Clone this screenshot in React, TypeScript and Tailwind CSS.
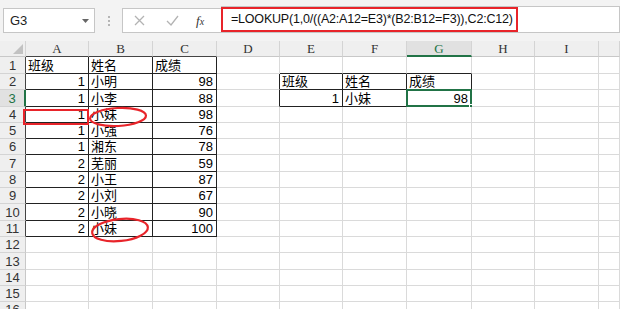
import React from 'react';

const COLS = [26, 63, 64, 64, 63, 63, 64, 65, 63, 64, 21];
const LETTERS = ['', 'A', 'B', 'C', 'D', 'E', 'F', 'G', 'H', 'I', ''];

type Cell = { v: string; num?: boolean };

// sheet data keyed by "row,col"
const data: Record<string, Cell> = {};
const put = (r: number, c: number, v: string, num = false) => (data[`${r},${c}`] = { v, num });

const klass = ['1', '1', '1', '1', '1', '2', '2', '2', '2', '2'];
const names = ['小明', '小李', '小妹', '小强', '湘东', '芜丽', '小王', '小刘', '小晓', '小妹'];
const scores = ['98', '88', '98', '76', '78', '59', '87', '67', '90', '100'];
put(1, 1, '班级');
put(1, 2, '姓名');
put(1, 3, '成绩');
klass.forEach((k, i) => {
  put(i + 2, 1, k, true);
  put(i + 2, 2, names[i]);
  put(i + 2, 3, scores[i], true);
});
put(2, 5, '班级');
put(2, 6, '姓名');
put(2, 7, '成绩');
put(3, 5, '1', true);
put(3, 6, '小妹');
put(3, 7, '98', true);

const inBox = (r: number, c: number) =>
  (r >= 1 && r <= 11 && c >= 1 && c <= 3) || (r >= 2 && r <= 3 && c >= 5 && c <= 7);

const ROWS = 16;

export default function App() {
  const cells: React.ReactNode[] = [];

  for (let r = 0; r <= ROWS; r++) {
    for (let c = 0; c < COLS.length; c++) {
      const key = `${r}-${c}`;
      const rightDark = inBox(r, c) || inBox(r, c + 1);
      const bottomDark = inBox(r, c) || inBox(r + 1, c);

      if (r === 0) {
        // column header strip
        if (c === 0) {
          cells.push(
            <div key={key} className="relative bg-[#efefef] border-r border-b border-r-[#d4d4d4] border-b-[#c8c8c8]">
              <svg className="absolute right-[2px] bottom-[2px]" width="10" height="10" viewBox="0 0 10 10">
                <polygon points="10,0 10,10 0,10" fill="#c2c2c2" />
              </svg>
            </div>
          );
          continue;
        }
        const active = c === 7;
        cells.push(
          <div
            key={key}
            className={
              'flex items-center justify-center border-r border-r-[#d4d4d4] text-[13px] leading-none font-["Liberation_Serif",serif] ' +
              (active
                ? 'bg-[#e1e1e1] text-[#217346] border-b-2 border-b-[#217346]'
                : 'bg-[#efefef] text-[#333] border-b ' + (bottomDark ? 'border-b-[#444]' : 'border-b-[#c8c8c8]'))
            }
          >
            {LETTERS[c]}
          </div>
        );
        continue;
      }

      if (c === 0) {
        // row header
        const active = r === 3;
        cells.push(
          <div
            key={key}
            className={
              'flex items-end justify-center pb-[1px] border-b border-b-[#d4d4d4] text-[13px] leading-none font-["Liberation_Sans",sans-serif] ' +
              (active
                ? 'bg-[#e1e1e1] text-[#217346] border-r-2 border-r-[#217346]'
                : 'bg-[#efefef] text-[#333] border-r ' + (rightDark ? 'border-r-[#444]' : 'border-r-[#c8c8c8]'))
            }
          >
            {r}
          </div>
        );
        continue;
      }

      const cell = data[`${r},${c}`];
      const selected = r === 3 && c === 7;
      cells.push(
        <div
          key={key}
          className={
            'relative flex items-end bg-white border-r border-b overflow-visible text-[13px] leading-none text-black font-["Liberation_Sans","Noto_Sans_CJK_SC",sans-serif] ' +
            (rightDark ? 'border-r-[#222] ' : 'border-r-[#dadada] ') +
            (bottomDark ? 'border-b-[#222] ' : 'border-b-[#dadada] ') +
            (cell?.num ? 'justify-end pr-[3px] pb-[1px]' : 'justify-start pl-[2px] pb-[1px]')
          }
        >
          {cell?.v}
          {selected && (
            <>
              <span className="absolute -left-[1px] -top-[1px] -right-[1px] -bottom-[1px] border-2 border-[#217346]" />
              <span className="absolute -right-[4px] -bottom-[4px] w-[6px] h-[6px] bg-[#217346] border border-white" />
            </>
          )}
        </div>
      );
    }
  }

  return (
    <div className="w-[620px] h-[309px] overflow-hidden bg-[#f3f3f3] flex flex-col">
      {/* formula bar */}
      <div className="h-[41px] shrink-0 flex items-start pt-[8px] pl-[3px]">
        <div className="w-[92px] h-[25px] bg-white border border-[#c6c6c6] flex items-center justify-between pl-[6px] pr-[5px] text-[13px] text-[#222] font-['Liberation_Sans',sans-serif]">
          <span>G3</span>
          <svg width="7" height="4" viewBox="0 0 7 4">
            <polygon points="0,0 7,0 3.5,4" fill="#666" />
          </svg>
        </div>
        <div className="w-[27px] h-[25px] flex items-center justify-center">
          <div className="flex flex-col gap-[2px]">
            <span className="w-[2px] h-[2px] bg-[#b5b5b5]" />
            <span className="w-[2px] h-[2px] bg-[#b5b5b5]" />
            <span className="w-[2px] h-[2px] bg-[#b5b5b5]" />
          </div>
        </div>
        <div className="w-[99px] h-[25px] bg-white border border-[#c6c6c6] border-r-0 flex items-center">
          <svg className="ml-[11px]" width="11" height="11" viewBox="0 0 11 11">
            <path d="M1 1 L10 10 M10 1 L1 10" stroke="#b3b3b3" strokeWidth="1.3" />
          </svg>
          <svg className="ml-[21px]" width="13" height="11" viewBox="0 0 13 11">
            <path d="M1 6 L5 10 L12 1" stroke="#b3b3b3" strokeWidth="1.3" fill="none" />
          </svg>
          <span className="ml-[17px] text-[13px] italic text-[#333] font-['Liberation_Serif',serif]">
            f<span className="text-[10px]">x</span>
          </span>
        </div>
        <div className="flex-1 h-[27px] -mt-[2px] bg-white border border-[#c6c6c6] border-l-0 flex items-stretch">
          <div className="w-[297px] shrink-0 border-2 border-[#e8242a] flex items-center pl-[8px] whitespace-nowrap overflow-hidden text-[12.5px] text-[#111] font-['Liberation_Sans',sans-serif] tracking-[-0.2px]">
            =LOOKUP(1,0/((A2:A12=E3)*(B2:B12=F3)),C2:C12)
          </div>
        </div>
      </div>

      {/* sheet */}
      <div className="relative">
        <div className="grid grid-cols-[26px_63px_64px_64px_63px_63px_64px_65px_63px_64px_21px] grid-rows-[16px_17px_repeat(15,16.3px)]">
          {cells}
        </div>

        {/* annotations */}
        <div className="absolute left-[23px] top-[68px] w-[66px] h-[16px] border-2 border-[#e8242a]" />
        <svg className="absolute left-0 top-0 pointer-events-none" width="620" height="268">
          <ellipse cx="118" cy="76" rx="28" ry="9" fill="none" stroke="#e8242a" strokeWidth="2.2" transform="rotate(-3 118 76)" />
          <ellipse cx="120" cy="189" rx="28" ry="11" fill="none" stroke="#e8242a" strokeWidth="2.2" transform="rotate(-6 120 189)" />
        </svg>
      </div>
    </div>
  );
}
